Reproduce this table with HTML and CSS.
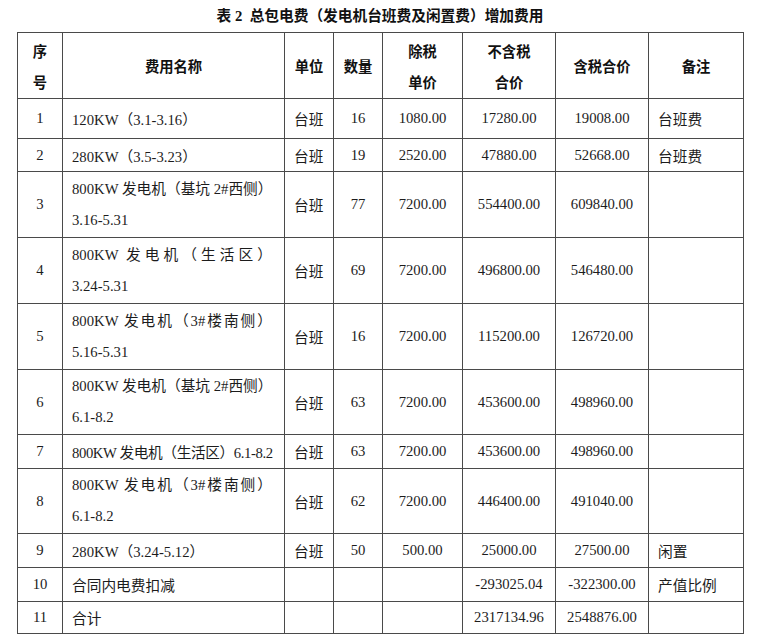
FILE: index.html
```html
<!DOCTYPE html>
<html lang="zh-CN">
<head>
<meta charset="utf-8">
<title>表2 总包电费增加费用</title>
<link rel="stylesheet" href="styles.css">
</head>
<body>
<div class="title">表 2&nbsp; 总包电费（发电机台班费及闲置费）增加费用</div>
<table class="fee">
  <colgroup>
    <col class="c-no"><col class="c-name"><col class="c-unit"><col class="c-qty">
    <col class="c-price"><col class="c-net"><col class="c-gross"><col class="c-note">
  </colgroup>
  <thead>
    <tr class="h-head">
      <th><div class="ln">序</div><div class="ln">号</div></th>
      <th>费用名称</th>
      <th>单位</th>
      <th>数量</th>
      <th><div class="ln">除税</div><div class="ln">单价</div></th>
      <th><div class="ln">不含税</div><div class="ln">合价</div></th>
      <th>含税合价</th>
      <th>备注</th>
    </tr>
  </thead>
  <tbody>
    <tr class="h-40">
      <td class="ctr">1</td><td class="lft">120KW（3.1-3.16）</td><td class="lft">台班</td><td class="ctr">16</td>
      <td class="ctr">1080.00</td><td class="ctr">17280.00</td><td class="ctr">19008.00</td><td class="lft">台班费</td>
    </tr>
    <tr class="h-33">
      <td class="ctr">2</td><td class="lft">280KW（3.5-3.23）</td><td class="lft">台班</td><td class="ctr">19</td>
      <td class="ctr">2520.00</td><td class="ctr">47880.00</td><td class="ctr">52668.00</td><td class="lft">台班费</td>
    </tr>
    <tr class="h-66">
      <td class="ctr">3</td><td class="lft"><div class="ln">800KW 发电机（基坑 2#西侧）</div><div class="ln">3.16-5.31</div></td><td class="lft">台班</td><td class="ctr">77</td>
      <td class="ctr">7200.00</td><td class="ctr">554400.00</td><td class="ctr">609840.00</td><td class="lft"></td>
    </tr>
    <tr class="h-66">
      <td class="ctr">4</td><td class="lft"><div class="ln jst">800KW 发电机（生活区）</div><div class="ln">3.24-5.31</div></td><td class="lft">台班</td><td class="ctr">69</td>
      <td class="ctr">7200.00</td><td class="ctr">496800.00</td><td class="ctr">546480.00</td><td class="lft"></td>
    </tr>
    <tr class="h-66">
      <td class="ctr">5</td><td class="lft"><div class="ln jst">800KW 发电机（3#楼南侧）</div><div class="ln">5.16-5.31</div></td><td class="lft">台班</td><td class="ctr">16</td>
      <td class="ctr">7200.00</td><td class="ctr">115200.00</td><td class="ctr">126720.00</td><td class="lft"></td>
    </tr>
    <tr class="h-65">
      <td class="ctr">6</td><td class="lft"><div class="ln">800KW 发电机（基坑 2#西侧）</div><div class="ln">6.1-8.2</div></td><td class="lft">台班</td><td class="ctr">63</td>
      <td class="ctr">7200.00</td><td class="ctr">453600.00</td><td class="ctr">498960.00</td><td class="lft"></td>
    </tr>
    <tr class="h-34">
      <td class="ctr">7</td><td class="lft"><span class="tight">800KW 发电机（生活区）6.1-8.2</span></td><td class="lft">台班</td><td class="ctr">63</td>
      <td class="ctr">7200.00</td><td class="ctr">453600.00</td><td class="ctr">498960.00</td><td class="lft"></td>
    </tr>
    <tr class="h-65">
      <td class="ctr">8</td><td class="lft"><div class="ln jst">800KW 发电机（3#楼南侧）</div><div class="ln">6.1-8.2</div></td><td class="lft">台班</td><td class="ctr">62</td>
      <td class="ctr">7200.00</td><td class="ctr">446400.00</td><td class="ctr">491040.00</td><td class="lft"></td>
    </tr>
    <tr class="h-34">
      <td class="ctr">9</td><td class="lft">280KW（3.24-5.12）</td><td class="lft">台班</td><td class="ctr">50</td>
      <td class="ctr">500.00</td><td class="ctr">25000.00</td><td class="ctr">27500.00</td><td class="lft">闲置</td>
    </tr>
    <tr class="h-34">
      <td class="ctr">10</td><td class="lft">合同内电费扣减</td><td class="lft"></td><td class="ctr"></td>
      <td class="ctr"></td><td class="ctr">-293025.04</td><td class="ctr">-322300.00</td><td class="lft">产值比例</td>
    </tr>
    <tr class="h-32">
      <td class="ctr">11</td><td class="lft">合计</td><td class="lft"></td><td class="ctr"></td>
      <td class="ctr"></td><td class="ctr">2317134.96</td><td class="ctr">2548876.00</td><td class="lft"></td>
    </tr>
  </tbody>
</table>
</body>
</html>
```

FILE: styles.css
```css
html, body {
  margin: 0;
  padding: 0;
  background: #ffffff;
}
body {
  width: 760px;
  height: 644px;
  overflow: hidden;
  color: #1c1c1c;
  font-family: "Liberation Serif", "Noto Sans CJK SC", serif;
}
.title {
  height: 32px;
  line-height: 32px;
  text-align: center;
  font-size: 14.7px;
  font-weight: bold;
  font-family: "Liberation Serif", "Noto Sans CJK SC", sans-serif;
  color: #111;
}
.fee {
  margin-left: 17px;
  border-collapse: collapse;
  table-layout: fixed;
  width: 726px;
  font-size: 14.7px;
}
.c-no { width: 45px; }
.c-name { width: 222px; }
.c-unit { width: 49px; }
.c-qty { width: 49px; }
.c-price { width: 80px; }
.c-net { width: 93px; }
.c-gross { width: 93px; }
.c-note { width: 95px; }
.fee th, .fee td {
  border: 1px solid #4a4a4a;
  padding: 0;
  vertical-align: middle;
  white-space: nowrap;
  overflow: hidden;
}
.fee th {
  font-family: "Noto Sans CJK SC", sans-serif;
  font-weight: bold;
  font-size: 14.3px;
  text-align: center;
  line-height: 32px;
  color: #111;
}
.h-head { height: 66px; }
.h-40 { height: 40px; }
.h-33 { height: 33px; }
.h-34 { height: 34px; }
.h-32 { height: 32px; }
.h-65 { height: 65px; }
.h-66 { height: 66px; }
.ctr {
  text-align: center;
}
.lft {
  text-align: left;
  padding-left: 9px !important;
  padding-right: 12px !important;
}
.ln {
  line-height: 31px;
}
.jst {
  text-align: justify;
  text-align-last: justify;
}
.tight {
  letter-spacing: -0.4px;
}
```
